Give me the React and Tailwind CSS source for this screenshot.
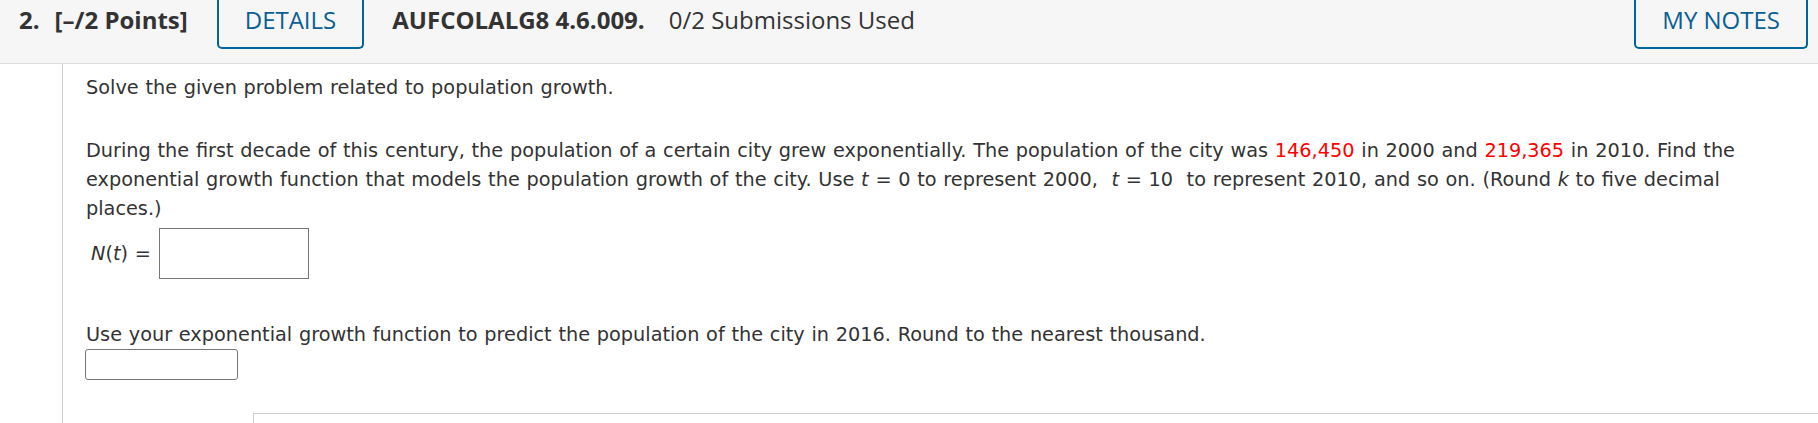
import React from 'react';

const Red = ({ children }) => <span className="text-[#ff0000]">{children}</span>;
const Var = ({ children }) => <i className="italic">{children}</i>;

const HeaderButton = ({ children }) => (
  <button className="border-x-2 border-b-2 border-[#00659b] rounded-b-[5px] px-[26px] pt-[3px] pb-[11px] leading-[33px] text-[24px] text-[#0b5f93] bg-transparent">
    {children}
  </button>
);

export default function App() {
  return (
    <div className="min-h-screen bg-white text-[#333] font-['DejaVu_Sans',sans-serif]">
      {/* Question header */}
      <header className="flex items-start h-[64px] bg-[#f6f6f6] border-b border-[#dddddd] pl-[19px] pr-[10px] font-['Open_Sans',sans-serif] text-[24px] text-[#333]">
        <div className="flex items-start pt-[3px] leading-[33px]">
          <span className="font-bold">2.</span>
          <span className="font-bold ml-[15px]">[–/2 Points]</span>
        </div>
        <div className="ml-[29px]">
          <HeaderButton>DETAILS</HeaderButton>
        </div>
        <div className="flex items-start pt-[3px] leading-[33px] ml-[28px]">
          <span className="font-bold">AUFCOLALG8 4.6.009.</span>
          <span className="ml-[24px]">0/2 Submissions Used</span>
        </div>
        <div className="ml-auto">
          <HeaderButton>MY NOTES</HeaderButton>
        </div>
      </header>

      {/* Question body */}
      <div className="flex min-h-[359px]">
        <div className="w-[63px] shrink-0 border-r border-[#cccccc]" />
        <div className="flex-1 pl-[23px] pt-[9px] text-[19.3px] leading-[29px] [word-spacing:0.6px]">
          <p className="pr-[56px]">Solve the given problem related to population growth.</p>
          <p className="pr-[56px] mt-[34px]">
            During the first decade of this century, the population of a certain city grew exponentially. The population of the city was <Red>146,450</Red> in 2000 and <Red>219,365</Red> in 2010. Find the exponential growth function that models the population growth of the city. Use <Var>t</Var> = 0 to represent 2000,&nbsp; <Var>t</Var> = 10&nbsp; to represent 2010, and so on. (Round <Var>k</Var> to five decimal places.)
          </p>
          <div className="flex items-center mt-[5px] ml-[5px]">
            <span>
              <Var>N</Var>(<Var>t</Var>) =
            </span>
            <div className="ml-[8px] w-[150px] h-[51px] border border-[#777777] bg-white" />
          </div>
          <p className="pr-[56px] mt-[41px]">
            Use your exponential growth function to predict the population of the city in 2016. Round to the nearest thousand.
          </p>
          <div className="w-[153px] h-[31px] border border-[#777777] rounded-[3px] -ml-[1px]" />
          <div className="ml-[167px] mt-[33px] h-[12px] border-t border-l border-[#cccccc]" />
        </div>
      </div>
    </div>
  );
}
